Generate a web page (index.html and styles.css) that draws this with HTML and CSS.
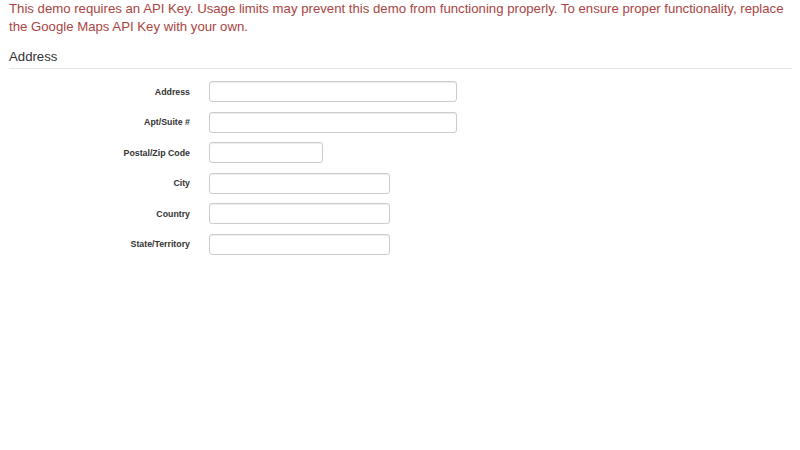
FILE: index.html
```html
<!DOCTYPE html>
<html>
<head>
<meta charset="utf-8">
<link rel="stylesheet" href="styles.css">
</head>
<body>
<div class="page">
  <p class="warning">This demo requires an API Key. Usage limits may prevent this demo from functioning properly. To ensure proper functionality, replace the Google Maps API Key with your own.</p>
  <form class="form">
    <div class="legend">Address</div>
    <div class="rows">
      <div class="row"><label class="label">Address</label><input class="input input-lg" type="text"></div>
      <div class="row"><label class="label">Apt/Suite #</label><input class="input input-lg" type="text"></div>
      <div class="row"><label class="label">Postal/Zip Code</label><input class="input input-sm" type="text"></div>
      <div class="row"><label class="label">City</label><input class="input input-md" type="text"></div>
      <div class="row"><label class="label">Country</label><input class="input input-md" type="text"></div>
      <div class="row"><label class="label">State/Territory</label><input class="input input-md" type="text"></div>
    </div>
  </form>
</div>
</body>
</html>
```
FILE: styles.css
```css
html, body {
  margin: 0;
  padding: 0;
  background: #fff;
}
body {
  font-family: "Liberation Sans", Arial, sans-serif;
  color: #333;
}
.page {
  padding: 0 8px 0 9px;
}
.warning {
  margin: 0;
  font-size: 13.2px;
  line-height: 18px;
  color: #a94442;
}
.form {
  margin: 0;
  padding-top: 12px;
}
.legend {
  font-size: 13.2px;
  line-height: 18px;
  color: #333;
  padding-bottom: 2px;
  border-bottom: 1px solid #e5e5e5;
}
.rows {
  display: flex;
  flex-direction: column;
  gap: 9.6px;
  margin-top: 12px;
}
.row {
  display: flex;
  align-items: center;
  gap: 19px;
}
.label {
  width: 181px;
  text-align: right;
  font-size: 8.8px;
  font-weight: bold;
  color: #333;
}
.input {
  box-sizing: border-box;
  height: 21px;
  margin: 0;
  padding: 2px 6px;
  border: 1px solid #ccc;
  border-radius: 3px;
  background: #fff;
  box-shadow: inset 0 1px 1px rgba(0,0,0,0.075);
  font-family: inherit;
  font-size: 10px;
}
.input-lg { width: 248px; }
.input-md { width: 181px; }
.input-sm { width: 114px; }
```
